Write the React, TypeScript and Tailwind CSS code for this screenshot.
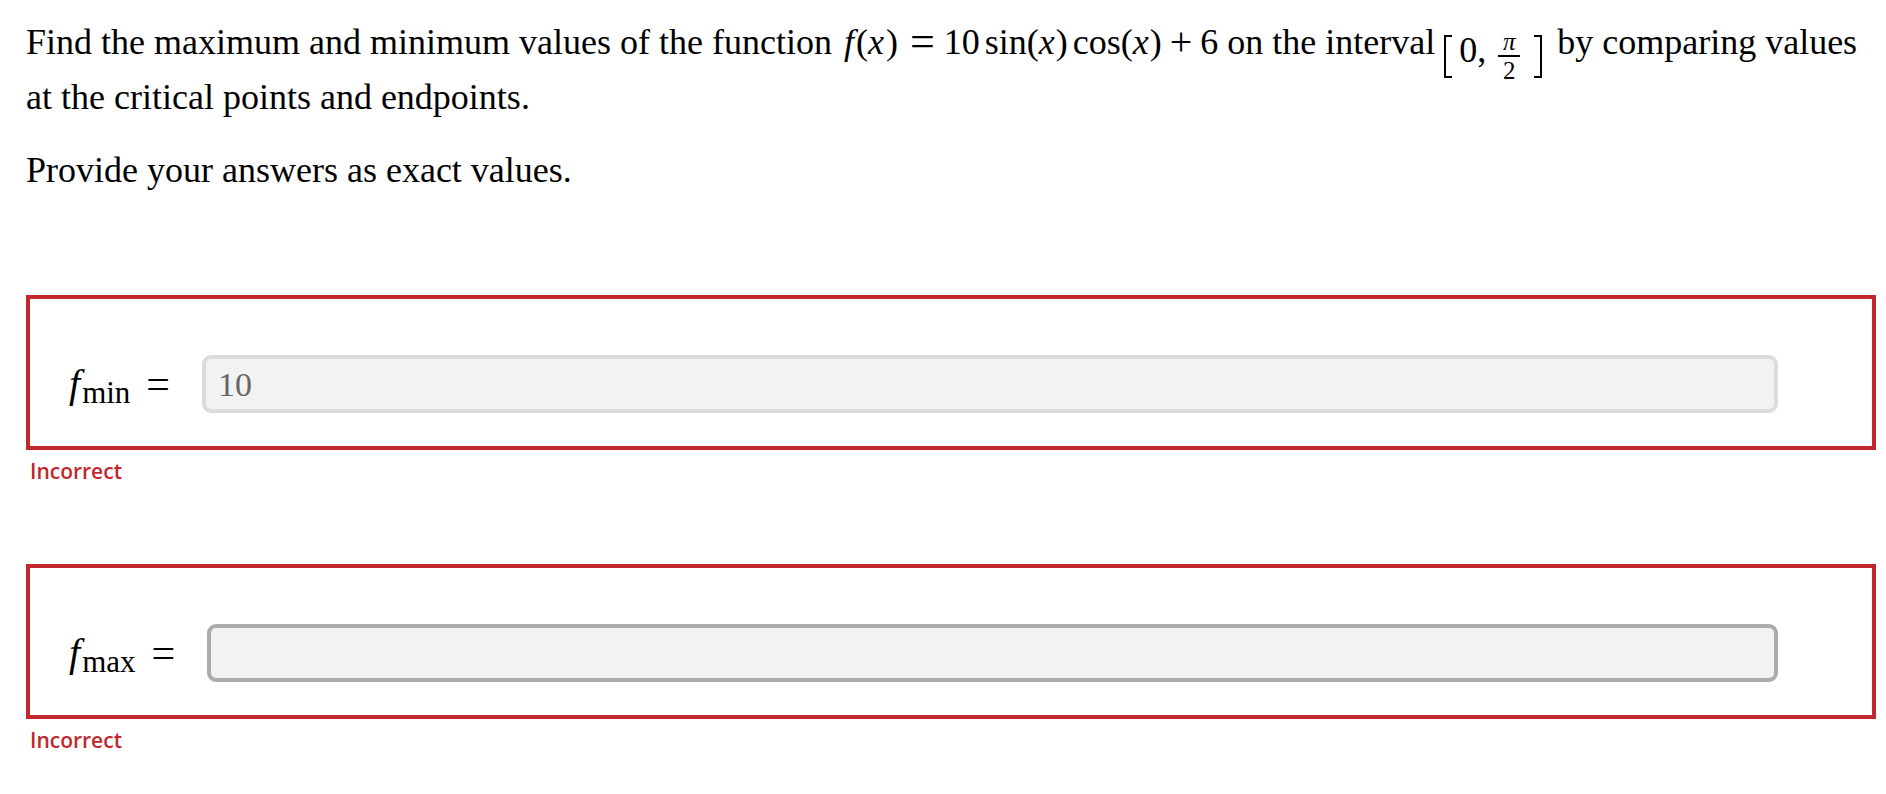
export default function App() {
  return (
    <div className="min-h-screen bg-white pl-[26px] pr-[10px] pt-[17px] text-black font-['Liberation_Serif',serif]">
      <Question />
      <AnswerField sub="min" value="10" variant="filled" />
      <AnswerField sub="max" value="" variant="empty" />
    </div>
  );
}

function Question() {
  return (
    <div className="text-[36px] leading-[50px]">
      <p className="whitespace-nowrap">
        <span className="block pb-[5px]">
          Find the maximum and minimum values of the function{" "}
          <span className="ml-[3px] mr-[2px] italic">f</span>(<span className="mr-[2px] italic">x</span>)
          <span className="ml-[12px] mr-[9px] inline-block align-[-2px] text-[44px] leading-none">=</span>10
          <span className="ml-[5px]">sin</span>(<span className="mr-[1px] italic">x</span>)
          <span className="ml-[5px]">cos</span>(<span className="mr-[1px] italic">x</span>)
          <span className="mx-[8px] inline-block align-[-1px] text-[40px] leading-none">+</span>6 on the interval{" "}
          <Interval /> by comparing values
        </span>
        <span className="block">at the critical points and endpoints.</span>
      </p>
      <p className="mt-[23px]">Provide your answers as exact values.</p>
    </div>
  );
}

function Interval() {
  return (
    <span className="mr-[6px] inline-flex h-[34px] translate-y-[4px] items-center align-middle">
      <span className="inline-block h-[43px] w-[8px] shrink-0 translate-y-[7px] border-y-2 border-l-2 border-black" />
      <span className="ml-[7px] leading-none">0,</span>
      <span className="ml-[12px] mr-[14px] inline-flex translate-y-[6px] flex-col items-center text-[25px] leading-none">
        <span className="italic">π</span>
        <span className="my-[1px] h-[2px] w-[22px] bg-black" />
        <span>2</span>
      </span>
      <span className="inline-block h-[43px] w-[8px] shrink-0 translate-y-[7px] border-y-2 border-r-2 border-black" />
    </span>
  );
}

function AnswerField({ sub, value, variant }: { sub: string; value: string; variant: "filled" | "empty" }) {
  const inputBorder = variant === "filled" ? "border-[#dcdcdc]" : "border-[#acacac]";
  return (
    <div className={variant === "filled" ? "mt-[100px]" : "mt-[79px]"}>
      <div className="flex items-center border-4 border-[#c1272d] pl-[39px] pr-[94px] pt-[56px] pb-[33px]">
        <div className="flex items-center">
          <span className="text-[40px] italic leading-none">f</span>
          <span className="ml-[2px] mt-[16px] text-[31px] leading-none">{sub}</span>
          <span className="ml-[16px] mr-[32px] text-[42px] leading-none">=</span>
        </div>
        <div
          className={`flex h-[58px] flex-1 items-center rounded-[9px] border-[4px] ${inputBorder} bg-[#f2f2f2] px-[12px] text-[34px] text-[#666]`}
        >
          {value}
        </div>
      </div>
      <div className="mt-[7px] pl-[4px] font-['Open_Sans',sans-serif] text-[21px] font-semibold leading-[28px] text-[#c1272d]">
        Incorrect
      </div>
    </div>
  );
}
